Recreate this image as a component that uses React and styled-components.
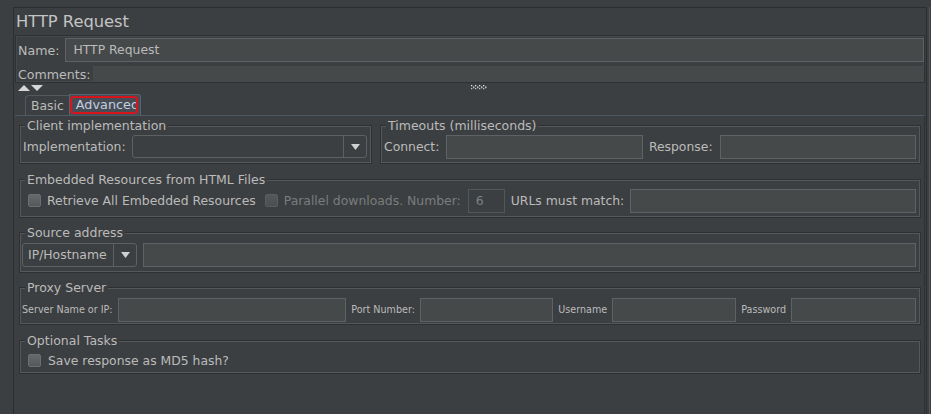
import React from 'react';
import styled, { createGlobalStyle } from 'styled-components';

const Global = createGlobalStyle`
  html, body { margin: 0; padding: 0; background: #3c3f41; }
  body { font-family: "DejaVu Sans", "Liberation Sans", sans-serif; color: #bbbbbb; }
  * { box-sizing: border-box; }
`;

const Screen = styled.div`
  width: 931px;
  height: 414px;
  overflow: hidden;
  background: #3c3f41;
  padding: 7px 0 0 13px;
  display: flex;
`;

const Frame = styled.div`
  flex: 0 0 914px;
  height: 420px;
  border-left: 1px solid #2b2d2e;
  border-top: 1px solid #2b2d2e;
  border-right: 1px solid #2b2d2e;
  padding: 0 1px 0 1px;
  display: flex;
  flex-direction: column;
`;

const EdgeLine = styled.div`
  flex: 0 0 1px;
  margin-left: 2px;
  background: #55585a;
`;

const Title = styled.div`
  height: 27px;
  font-size: 16.3px;
  line-height: 27px;
  padding-left: 1px;
  color: #c4c4c4;
`;

const NameBox = styled.div`
  height: 48px;
  border: 1px solid #2e3032;
  box-shadow: inset 0 0 0 1px #46494b;
  padding: 2px 0 0 1px;
  display: flex;
  flex-direction: column;
  gap: 4px;
`;

const Row = styled.div`
  display: flex;
  align-items: center;
  gap: ${p => p.$gap ?? 6}px;
  height: ${p => p.$h ?? 24}px;
  padding-left: ${p => p.$pl ?? 0}px;
  margin-top: ${p => p.$mt ?? 0}px;
`;

const Label = styled.span`
  font-size: ${p => p.$size ?? 12.4}px;
  white-space: nowrap;
  color: ${p => (p.$disabled ? '#7a7c7e' : '#bbbbbb')};
  margin-right: ${p => p.$mr ?? 0}px;
`;

const Field = styled.div`
  min-width: 0;
  flex-basis: ${p => (p.$w ? `${p.$w}px` : '0')};
  flex-grow: ${p => (p.$w ? 0 : p.$grow ?? 1)};
  flex-shrink: ${p => (p.$w ? 0 : 1)};
  height: ${p => p.$h ?? 24}px;
  background: ${p => (p.$disabled ? '#3c3f41' : '#45494a')};
  border: 1px solid ${p => (p.$flat ? '#45494a' : p.$disabled ? '#54575a' : '#5e6264')};
  font-size: 12.4px;
  line-height: ${p => (p.$h ?? 24) - 2}px;
  padding-left: 7px;
  color: ${p => (p.$disabled ? '#7d7f81' : '#bbbbbb')};
  white-space: nowrap;
`;

const SplitRow = styled.div`
  height: 11px;
  display: flex;
  align-items: center;
  position: relative;
  padding-left: 3px;
`;

const Arrows = styled.svg`
  display: block;
`;

const Grip = styled.svg`
  position: absolute;
  left: 456px;
  top: 2px;
`;

const TabStrip = styled.div`
  height: 21px;
  display: flex;
  align-items: flex-end;
  padding-left: 10px;
`;

const Tab = styled.div`
  height: 20px;
  padding: 0 5px;
  border: 1px solid #56595c;
  border-bottom: none;
  border-right: none;
  border-radius: 4px 0 0 0;
  background: #3c3f41;
  font-size: 12.4px;
  line-height: 19px;
  color: #bbbbbb;
  display: flex;
  align-items: center;
`;

const ActiveTab = styled.div`
  height: 21px;
  width: 72px;
  border: 1px solid #5a6270;
  border-bottom: none;
  border-radius: 0 3px 0 0;
  background: #474c55;
  padding: 1px 2px 1px 0;
`;

const FocusRing = styled.div`
  height: 18px;
  border: 2px solid #d8151d;
  border-radius: 4px;
  overflow: hidden;
  font-size: 12.8px;
  line-height: 13px;
  padding-left: 4px;
  color: #c3cfe0;
  white-space: nowrap;
`;

const TabBody = styled.div`
  flex: 1;
  border-top: 1px solid #4e5867;
  border-right: 1px solid #2e3032;
  padding: 2px 3px 0 4px;
  display: flex;
  flex-direction: column;
  align-items: stretch;
`;

const GroupRow = styled.div`
  display: flex;
  gap: 8px;
`;

const Group = styled.fieldset`
  margin: ${p => p.$mt ?? 0}px 0 0 0;
  padding: 0 4px ${p => p.$pb ?? 3}px ${p => p.$pl ?? 2}px;
  min-width: 0;
  flex: ${p => (p.$w ? `0 0 ${p.$w}px` : p.$fill ? '1 1 0' : '0 0 auto')};
  border: 1px solid #2e3032;
  box-shadow: inset 0 0 0 1px #55585a;
`;

const Legend = styled.legend`
  padding: 0 2px;
  margin-left: 3px;
  font-size: 12.5px;
  line-height: 15px;
  color: #bbbbbb;
  background: #3c3f41;
`;

const Check = styled.span`
  flex: 0 0 13px;
  width: 13px;
  height: 13px;
  border-radius: 2px;
  border: 1px solid ${p => (p.$disabled ? '#5a5d5f' : '#6c6f71')};
  background: ${p =>
    p.$disabled
      ? 'linear-gradient(#55585a, #4c4f51)'
      : 'linear-gradient(#66696b, #56595b)'};
  margin-left: ${p => p.$ml ?? 0}px;
`;

const Combo = styled.div`
  flex: ${p => (p.$w ? `0 0 ${p.$w}px` : '1 1 0')};
  height: ${p => p.$h ?? 23}px;
  border: 1px solid #5e6163;
  border-radius: 3px;
  display: flex;
  align-items: stretch;
  background: #3c3f41;
`;

const ComboText = styled.div`
  flex: 1;
  font-size: 12.4px;
  line-height: ${p => (p.$h ?? 23) - 2}px;
  padding-left: 5px;
  white-space: nowrap;
  overflow: hidden;
`;

const ComboArrow = styled.div`
  flex: 0 0 23px;
  border-left: 1px solid #5e6163;
  display: flex;
  align-items: center;
  justify-content: center;
`;

const Tri = () => (
  <svg width="9" height="6" viewBox="0 0 9 6">
    <path d="M0 0 H9 L4.5 6 Z" fill="#d0d0d0" />
  </svg>
);

const ComboBox = ({ w, h, text }) => (
  <Combo $w={w} $h={h}>
    <ComboText $h={h}>{text}</ComboText>
    <ComboArrow>
      <Tri />
    </ComboArrow>
  </Combo>
);

export default function App() {
  const gripDots = [];
  for (let i = 0; i < 8; i++) {
    gripDots.push(<rect key={'a' + i} x={i * 2} y={(i % 2) * 1.5} width="1.3" height="1.3" fill="#e6e6e6" />);
    gripDots.push(<rect key={'b' + i} x={i * 2} y={3 - (i % 2)} width="1.3" height="1.3" fill="#bdbdbd" />);
  }
  return (
    <>
      <Global />
      <Screen>
        <Frame>
          <Title>HTTP Request</Title>
          <NameBox>
            <Row $h={24} $gap={6} $pl={1}>
              <Label $size={12.6}>Name:</Label>
              <Field $h={24}>HTTP Request</Field>
            </Row>
            <Row $h={16} $gap={2} $pl={1}>
              <Label $size={12.6}>Comments:</Label>
              <Field $h={16} $flat />
            </Row>
          </NameBox>
          <SplitRow>
            <Arrows width="26" height="7" viewBox="0 0 26 7">
              <path d="M0 6 L6 0 L12 6 Z" fill="#d6d6d6" />
              <path d="M13 0 L25 0 L19 6 Z" fill="#d6d6d6" />
            </Arrows>
            <Grip width="16" height="5" viewBox="0 0 16 5">
              {gripDots}
            </Grip>
          </SplitRow>
          <TabStrip>
            <Tab>Basic</Tab>
            <ActiveTab>
              <FocusRing>Advanced</FocusRing>
            </ActiveTab>
          </TabStrip>
          <TabBody>
            <GroupRow>
              <Group $w={353} $pl={2}>
                <Legend>Client implementation</Legend>
                <Row $h={27} $gap={6} $pl={1}>
                  <Label>Implementation:</Label>
                  <ComboBox h={23} text="" />
                </Row>
              </Group>
              <Group $fill $pl={2}>
                <Legend>Timeouts (milliseconds)</Legend>
                <Row $h={27} $gap={6} $pl={1}>
                  <Label $mr={1}>Connect:</Label>
                  <Field />
                  <Label $mr={1}>Response:</Label>
                  <Field />
                </Row>
              </Group>
            </GroupRow>
            <Group $mt={8} $pl={2}>
              <Legend>Embedded Resources from HTML Files</Legend>
              <Row $h={27} $gap={6} $pl={1}>
                <Check $ml={5} />
                <Label $mr={3}>Retrieve All Embedded Resources</Label>
                <Check $disabled />
                <Label $disabled $mr={1}>Parallel downloads. Number:</Label>
                <Field $w={37} $disabled>6</Field>
                <Label $mr={0}>URLs must match:</Label>
                <Field />
              </Row>
            </Group>
            <Group $mt={7} $pl={2} $pb={4}>
              <Legend>Source address</Legend>
              <Row $h={26} $gap={6} $pl={0} $mt={2}>
                <ComboBox w={115} h={24} text="IP/Hostname" />
                <Field />
              </Row>
            </Group>
            <Group $mt={7} $pl={2} $pb={2}>
              <Legend>Proxy Server</Legend>
              <Row $h={25} $gap={5} $pl={0} $mt={2}>
                <Label $size={9.6}>Server Name or IP:</Label>
                <Field $grow={233} />
                <Label $size={9.6}>Port Number:</Label>
                <Field $grow={132} />
                <Label $size={9.6}>Username</Label>
                <Field $grow={122} />
                <Label $size={9.6}>Password</Label>
                <Field $grow={123} />
              </Row>
            </Group>
            <Group $mt={8} $pl={2} $pb={3}>
              <Legend>Optional Tasks</Legend>
              <Row $h={20} $gap={7} $pl={1} $mt={2}>
                <Check $ml={5} />
                <Label>Save response as MD5 hash?</Label>
              </Row>
            </Group>
          </TabBody>
        </Frame>
        <EdgeLine />
      </Screen>
    </>
  );
}
